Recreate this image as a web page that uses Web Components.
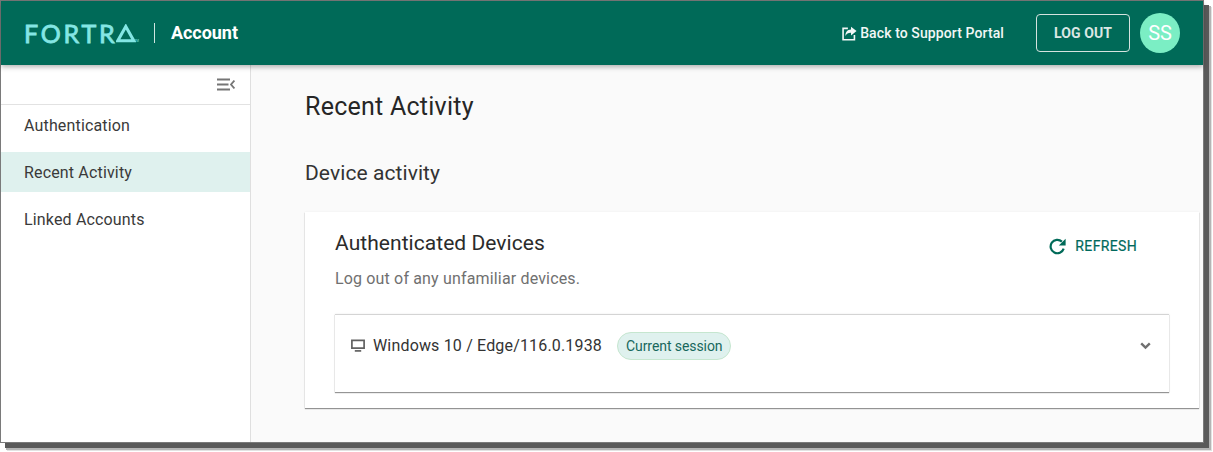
<!doctype html>
<html>
<head>
<meta charset="utf-8">
<title>Account</title>
<style>
  html, body { margin: 0; padding: 0; }
  body { font-family: Roboto, "Liberation Sans", sans-serif; }
</style>
</head>
<body>
<app-window>
  <app-header slot="header"></app-header>
  <side-nav slot="side">
    <nav-item>Authentication</nav-item>
    <nav-item active>Recent Activity</nav-item>
    <nav-item>Linked Accounts</nav-item>
  </side-nav>
  <activity-page slot="main"></activity-page>
</app-window>

<script>
  class AppWindow extends HTMLElement {
    constructor() {
      super();
      this.attachShadow({mode: 'open'}).innerHTML = `
      <style>
        /* host box is the window plus the screenshot tool's drop shadow */
        :host {
          display: block;
          width: 1212px;
          height: 451px;
          background:
            linear-gradient(#5a5a5a, #5a5a5a) 5px 5px / 1204px 443px no-repeat,
            linear-gradient(#b4b4b4, #b4b4b4) 6px 6px / 1205px 444px no-repeat,
            linear-gradient(#e2e2e2, #e2e2e2) 7px 7px / 1205px 444px no-repeat;
        }
        .frame {
          display: grid;
          grid-template-columns: 250px 1fr;
          grid-template-rows: 64px 1fr;
          box-sizing: border-box;
          width: 1204px;
          height: 443px;
          background: #fafafa;
          border: 1px solid #7a7a7a;
        }
        .top { grid-column: 1 / 3; position: relative; z-index: 2; }
      </style>
      <div class="frame">
        <div class="top"><slot name="header"></slot></div>
        <slot name="side"></slot>
        <slot name="main"></slot>
      </div>
      `;
    }
  }

  class AppHeader extends HTMLElement {
    constructor() {
      super();
      this.attachShadow({mode: 'open'}).innerHTML = `
      <style>
        :host {
          display: flex;
          align-items: center;
          height: 64px;
          background: #006a58;
          color: #fff;
          padding: 0 23px 0 24px;
          box-shadow: 0 2px 5px rgba(0,0,0,.3);
        }
        .logo {
          display: flex;
          align-items: flex-end;
          color: #84e6e4;
          font: 400 25px/19px Lato, sans-serif;
          -webkit-text-stroke: .8px #84e6e4;
          letter-spacing: 2.8px;
          width: 121px;
          height: 19px;
          margin-left: -1px;
          flex: none;
        }
        .logo svg { margin-left: -2px; flex: none; }
        .tm { font: 3px/3px Roboto, sans-serif; -webkit-text-stroke: 0; letter-spacing: 0; margin-left: -1px; }
        .sep { width: 1px; height: 20px; background: #cfe5e0; margin: 0 16px 0 9px; }
        .app { font: 700 18px/20px Roboto, sans-serif; letter-spacing: -.05px; }
        .grow { flex: 1; }
        .back {
          display: flex;
          align-items: center;
          gap: 3px;
          font: 500 14px/20px Roboto, sans-serif;
          letter-spacing: .1px;
          color: #f2f7f6;
          margin-right: 32px;
        }
        .out {
          box-sizing: border-box;
          width: 94px;
          height: 38px;
          border: 1px solid #d5e3df;
          border-radius: 4px;
          display: flex;
          align-items: center;
          justify-content: center;
          font: 700 14px/20px Roboto, sans-serif;
          color: #dbe7e4;
          letter-spacing: .1px;
          margin-right: 10px;
        }
        .avatar {
          width: 40px;
          height: 40px;
          border-radius: 50%;
          background: #7beec4;
          display: flex;
          align-items: center;
          justify-content: center;
          font: 400 20px/20px Roboto, sans-serif;
        }
      </style>
      <div class="logo">FORTR<svg width="20" height="19" viewBox="0 0 20 19"><path d="M9.8 2.4 17.8 16.7H1.8Z" fill="none" stroke="#84e6e4" stroke-width="3"/></svg><span class="tm">TM</span></div>
      <div class="sep"></div>
      <div class="app">Account</div>
      <div class="grow"></div>
      <div class="back">
        <svg width="15" height="15" viewBox="0 0 14 14"><path d="M5.5 2.2H1v10.6h10.6V8.4" fill="none" stroke="#f2f7f6" stroke-width="1.5"/><path d="M8.4 .6v2.7C5 3.4 3.2 5.5 3.2 9.3 4.3 7 6 6.2 8.4 6.3v2.6L13.6 4.7Z" fill="#f2f7f6"/></svg>
        Back to Support Portal
      </div>
      <div class="out">LOG OUT</div>
      <div class="avatar">SS</div>
      `;
    }
  }

  class SideNav extends HTMLElement {
    constructor() {
      super();
      this.attachShadow({mode: 'open'}).innerHTML = `
      <style>
        :host {
          display: block;
          background: #fff;
          border-right: 1px solid #dfdfdf;
          box-sizing: border-box;
          width: 250px;
          position: relative;
          z-index: 1;
        }
        .toggle {
          height: 40px;
          box-sizing: border-box;
          border-bottom: 1px solid #e2e2e2;
          display: flex;
          align-items: center;
          justify-content: flex-end;
          padding: 0 15px 0 0;
        }
        .list { display: flex; flex-direction: column; gap: 7px; }
      </style>
      <div class="toggle">
        <svg width="18" height="13" viewBox="0 0 18 13"><path d="M0 1.5h13M0 6.5h11.5M0 11.5h13" stroke="#757575" stroke-width="2" fill="none"/><path d="M17.4 2.5 14 6.5l3.4 4" stroke="#757575" stroke-width="1.8" fill="none"/></svg>
      </div>
      <div class="list"><slot></slot></div>
      `;
    }
  }

  class NavItem extends HTMLElement {
    constructor() {
      super();
      this.attachShadow({mode: 'open'}).innerHTML = `
      <style>
        :host {
          display: flex;
          align-items: center;
          box-sizing: border-box;
          height: 40px;
          padding: 1px 0 0 23px;
          font: 400 16px/24px Roboto, sans-serif;
          letter-spacing: .16px;
          color: #3a3a3a;
        }
        :host([active]) { background: #dff1ee; }
      </style>
      <slot></slot>
      `;
    }
  }

  class ActivityPage extends HTMLElement {
    constructor() {
      super();
      this.attachShadow({mode: 'open'}).innerHTML = `
      <style>
        :host {
          display: block;
          padding: 25px 4px 0 54px;
          color: #212121;
        }
        h1 { margin: 0; font: 400 25px/34px Roboto, sans-serif; letter-spacing: .25px; color: #262626; }
        h2 { margin: 35px 0 0; font: 400 21px/28px Roboto, sans-serif; letter-spacing: .08px; color: #333; }
      </style>
      <h1>Recent Activity</h1>
      <h2>Device activity</h2>
      <device-card></device-card>
      `;
    }
  }

  class DeviceCard extends HTMLElement {
    constructor() {
      super();
      this.attachShadow({mode: 'open'}).innerHTML = `
      <style>
        :host {
          display: block;
          box-sizing: border-box;
          height: 196px;
          margin-top: 25px;
          background: #fff;
          padding: 16px 30px 0;
          box-shadow: 0 1px 1px rgba(0,0,0,.4), 0 0 2px rgba(0,0,0,.06);
        }
        .head { display: flex; justify-content: space-between; align-items: flex-start; height: 30px; }
        .title { font: 400 21px/30px Roboto, sans-serif; letter-spacing: .05px; color: #2b2b2b; }
        .refresh {
          display: flex;
          align-items: center;
          gap: 9px;
          margin: 3px 32px 0 0;
          font: 400 14px/30px Roboto, sans-serif;
          letter-spacing: .35px;
          color: #00695c;
          -webkit-text-stroke: .2px #00695c;
        }
        .hint { margin-top: 9px; font: 400 16px/24px Roboto, sans-serif; letter-spacing: .16px; color: #707070; }
        .row {
          box-sizing: border-box;
          height: 78px;
          margin-top: 23px;
          padding: 18px 16px 0;
          display: flex;
          align-items: flex-start;
          border-top: 1px solid #d4d4d4;
          box-shadow: 0 1px 1px rgba(0,0,0,.4), 0 0 2px rgba(0,0,0,.08);
          font: 400 16px/26px Roboto, sans-serif;
          color: #333;
        }
        .row .pc { margin: 6px 8px 0 0; flex: none; }
        .name { letter-spacing: .17px; }
        .chip {
          box-sizing: border-box;
          height: 28px;
          margin: -1px 0 0 15px;
          padding: 0 8px;
          border: 1px solid #c5e6cf;
          border-radius: 14px;
          background: #dff1ee;
          color: #17685d;
          font: 400 14px/27px Roboto, sans-serif;
          letter-spacing: -.08px;
        }
        .chev { margin: 9px 2px 0 auto; }
      </style>
      <div class="head">
        <div class="title">Authenticated Devices</div>
        <div class="refresh">
          <svg width="17" height="17" viewBox="0 0 17 17"><path d="M14.7 10.6A6.7 6.7 0 1 1 12.9 3.6" fill="none" stroke="#006a58" stroke-width="2.2"/><path d="M16.6 .8v6.8H9.8Z" fill="#006a58"/></svg>
          REFRESH
        </div>
      </div>
      <div class="hint">Log out of any unfamiliar devices.</div>
      <div class="row">
        <svg class="pc" width="14" height="13" viewBox="0 0 14 13"><path d="M.9 1.4h12.2v7.8H.9Z" fill="none" stroke="#616161" stroke-width="1.7"/><path d="M3.8 11.9h6.4" stroke="#616161" stroke-width="1.7"/></svg>
        <span class="name">Windows 10 / Edge/116.0.1938</span>
        <span class="chip">Current session</span>
        <svg class="chev" width="11" height="8" viewBox="0 0 11 8"><path d="M1.2 1.4 5.5 5.6 9.8 1.4" fill="none" stroke="#707070" stroke-width="2.4"/></svg>
      </div>
      `;
    }
  }

  customElements.define('app-window', AppWindow);
  customElements.define('app-header', AppHeader);
  customElements.define('side-nav', SideNav);
  customElements.define('nav-item', NavItem);
  customElements.define('activity-page', ActivityPage);
  customElements.define('device-card', DeviceCard);
</script>
</body>
</html>
